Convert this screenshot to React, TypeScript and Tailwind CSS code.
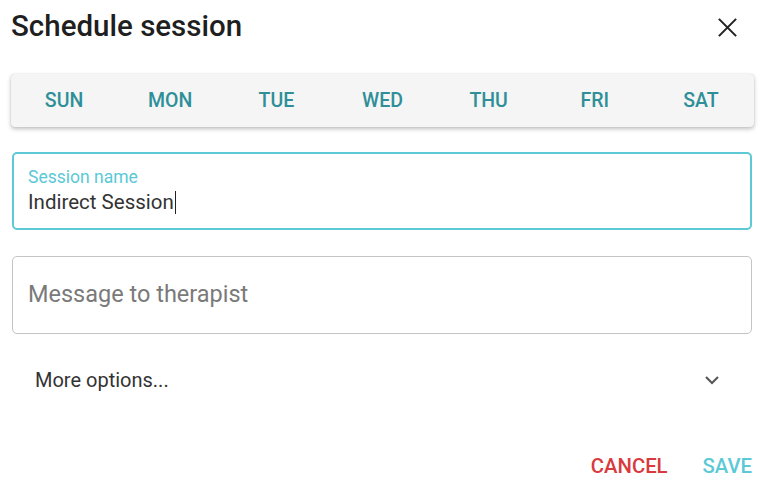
import React from "react";

const days = ["SUN", "MON", "TUE", "WED", "THU", "FRI", "SAT"];

export default function App() {
  return (
    <div
      className="relative w-[765px] h-[484px] bg-white overflow-hidden"
      style={{ fontFamily: "Roboto, 'Noto Sans', sans-serif" }}
    >
      <div className="flex items-center justify-between h-[52px] pl-[11px] pr-[26px] pt-[2px]">
        <h1 className="text-[29.5px] leading-none font-medium text-[#1f1f1f]">
          Schedule session
        </h1>
        <svg width="23" height="23" viewBox="0 0 24 24" className="text-[#222]">
          <path d="M3 3 L21 21 M21 3 L3 21" stroke="currentColor" strokeWidth="2.2" strokeLinecap="butt" />
        </svg>
      </div>

      <div className="mt-[22px] mx-[11px] h-[53px] rounded-[4px] bg-[#f5f5f5] shadow-[0_2px_4px_rgba(0,0,0,0.25),0_0_1px_rgba(0,0,0,0.2)] grid grid-cols-7 items-center">
        {days.map((d) => (
          <div key={d} className="text-center text-[19.5px] font-medium text-[#2e8f99] leading-none">
            {d}
          </div>
        ))}
      </div>

      <div className="mt-[25px] ml-[12px] w-[740px] h-[78px] border-2 border-[#5dc9d5] rounded-[5px] px-[14px] pt-[13px]">
        <div className="text-[17.5px] leading-[20px] text-[#5bc9d6]">Session name</div>
        <div className="mt-[3px] text-[20.5px] leading-[24px] text-[#333] flex items-center">
          Indirect Session
          <span className="inline-block w-[1.5px] h-[23px] bg-[#222] ml-[1px]" />
        </div>
      </div>

      <div className="mt-[26px] ml-[12px] w-[740px] h-[78px] border border-[#c4c4c4] rounded-[5px] px-[15px] flex items-center">
        <span className="text-[23.5px] text-[#7a7a7a] leading-none">Message to therapist</span>
      </div>

      <div className="mt-[36px] h-[20px] flex items-center justify-between pl-[35px] pr-[45px]">
        <span className="text-[20px] text-[#333] leading-none">More options...</span>
        <svg width="16" height="10" viewBox="0 0 16 10">
          <path d="M2 2 L8 8 L14 2" fill="none" stroke="#555" strokeWidth="2" />
        </svg>
      </div>

      <div className="mt-[66px] flex items-center justify-end pr-[13px] gap-[35px]">
        <span className="text-[20.3px] font-medium text-[#d93a3d] leading-none">CANCEL</span>
        <span className="text-[20.3px] font-medium text-[#5bc9d6] leading-none">SAVE</span>
      </div>
    </div>
  );
}
